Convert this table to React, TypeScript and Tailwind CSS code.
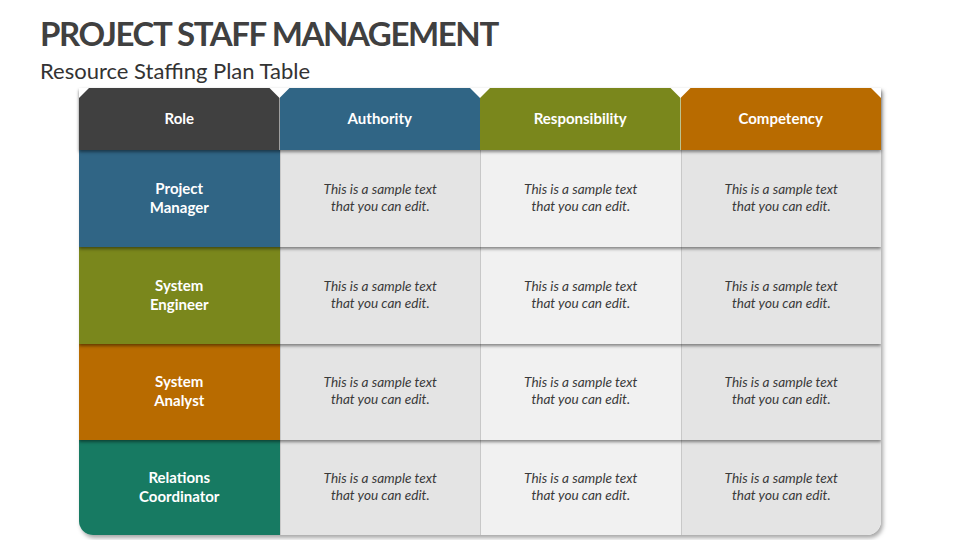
const headers = [
  { label: "Role", bg: "bg-[#404040]" },
  { label: "Authority", bg: "bg-[#306585]" },
  { label: "Responsibility", bg: "bg-[#7a871c]" },
  { label: "Competency", bg: "bg-[#b86b00]" },
];

const rows = [
  { role: ["Project", "Manager"], bg: "bg-[#306585]", h: "h-[97px]", z: "z-40" },
  { role: ["System", "Engineer"], bg: "bg-[#7a871c]", h: "h-[97px]", z: "z-30" },
  { role: ["System", "Analyst"], bg: "bg-[#b86b00]", h: "h-[96px]", z: "z-20" },
  { role: ["Relations", "Coordinator"], bg: "bg-[#177a62]", h: "h-[95px]", z: "z-10" },
];

const cellBg = ["bg-[#e4e4e4]", "bg-[#f1f1f1]", "bg-[#e4e4e4]"];

function SampleText() {
  return (
    <p className="text-[13.6px] leading-[17px] italic text-[#3a3a3a] text-center">
      This is a sample text
      <br />
      that you can edit.
    </p>
  );
}

export default function App() {
  return (
    <div className="w-[960px] h-[540px] bg-white overflow-hidden font-['Lato',sans-serif]">
      <div className="pl-[40px] pt-[13px]">
        <h1 className="text-[33px] leading-[40px] font-bold text-[#404040] tracking-[-1.4px]">
          PROJECT STAFF MANAGEMENT
        </h1>
        <h2 className="text-[22px] leading-[26px] text-[#333] mt-[5px]">Resource Staffing Plan Table</h2>
      </div>

      <div className="ml-[79px] mt-[4px] w-[802px] rounded-b-[14px] shadow-[2px_3px_4px_rgba(0,0,0,0.35)] relative">
        {/* header */}
        <div className="grid grid-cols-4 h-[62px] relative z-50 shadow-[0_2px_3px_rgba(0,0,0,0.45)]">
          {headers.map((h) => (
            <div
              key={h.label}
              className={`${h.bg} flex items-center justify-center text-white font-bold text-[15px] pb-[2px] [clip-path:polygon(10px_0,calc(100%-10px)_0,100%_10px,100%_100%,0_100%,0_10px)]`}
            >
              {h.label}
            </div>
          ))}
        </div>

        {/* body */}
        <div className="rounded-b-[14px] overflow-hidden">
          {rows.map((r, i) => (
            <div
              key={i}
              className={`grid grid-cols-4 ${r.h} relative ${r.z} ${
                i < rows.length - 1 ? "shadow-[0_2px_3px_rgba(0,0,0,0.45)]" : ""
              }`}
            >
              <div
                className={`${r.bg} flex flex-col items-center justify-center text-white font-bold text-[15px] leading-[19px] pb-[2px]`}
              >
                <span>{r.role[0]}</span>
                <span>{r.role[1]}</span>
              </div>
              {cellBg.map((c, j) => (
                <div
                  key={j}
                  className={`${c} flex items-center justify-center border-l border-[#c8c8c8] pb-[2px]`}
                >
                  <SampleText />
                </div>
              ))}
            </div>
          ))}
        </div>
      </div>
    </div>
  );
}
